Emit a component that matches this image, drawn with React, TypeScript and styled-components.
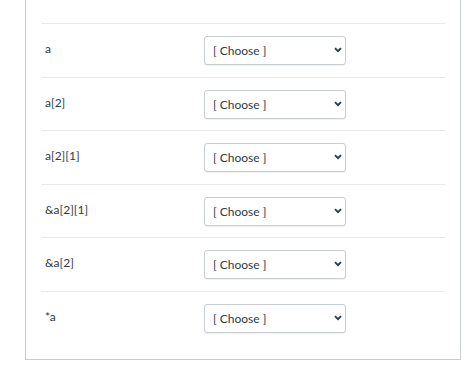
import React, {FC} from 'react';
import styled, {createGlobalStyle} from 'styled-components';

const GlobalStyle = createGlobalStyle`
  body {
    margin: 0;
    background: #fff;
    font-family: Lato, "Liberation Sans", sans-serif;
    color: #2d3b45;
  }
`;

const items = ['a', 'a[2]', 'a[2][1]', '&a[2][1]', '&a[2]', '*a'];

const Chevron: FC = () => (
  <ChevronIcon width="8" height="6" viewBox="0 0 8 6">
    <path d="M1 1.2 L4 4.2 L7 1.2" fill="none" stroke="#2d3b45" strokeWidth="1.9" />
  </ChevronIcon>
);

const App: FC = () => {
  return (
    <>
      <GlobalStyle />
      <Box>
        <Top />
        {items.map((label) => (
          <Row key={label}>
            <Label>{label}</Label>
            <SelectWrapper>
              <Select defaultValue="">
                <option value="">[ Choose ]</option>
              </Select>
              <Chevron />
            </SelectWrapper>
          </Row>
        ))}
      </Box>
    </>
  );
};

export default App;

const Box = styled.div`
  box-sizing: border-box;
  margin-left: 25px;
  width: 436px;
  border: 1px solid #c7cdd1;
  border-top: none;
  padding: 0 15px 14px;
`;

const Top = styled.div`
  height: 23px;
`;

const Row = styled.div`
  display: grid;
  grid-template-columns: 159px 142px;
  align-items: start;
  height: 53.6px;
  box-sizing: border-box;
  border-top: 1px solid #e6e9eb;
  padding: 12px 0 0 4px;
`;

const Label = styled.div`
  font-size: 12px;
  line-height: 14px;
  padding-top: 6px;
`;

const SelectWrapper = styled.div`
  position: relative;
  width: 142px;
  height: 29px;
`;

const Select = styled.select`
  appearance: none;
  width: 100%;
  height: 100%;
  margin: 0;
  border: 1px solid #c7cdd1;
  border-radius: 3px;
  background: #fff;
  box-shadow: 0 1px 1px rgba(0, 0, 0, 0.06);
  padding: 0 0 0 8px;
  font-family: Lato, "Liberation Sans", sans-serif;
  font-size: 12px;
  color: #2d3b45;
  outline: none;
`;

const ChevronIcon = styled.svg`
  position: absolute;
  right: 4px;
  top: 11px;
  pointer-events: none;
`;
